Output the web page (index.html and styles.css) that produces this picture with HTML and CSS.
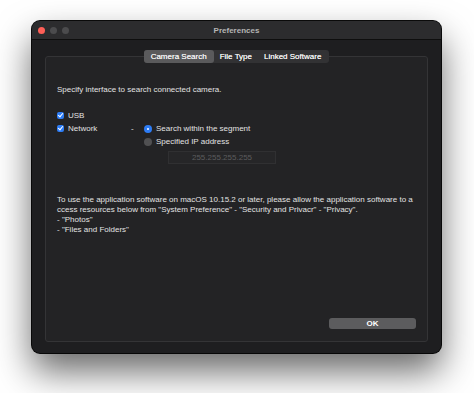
FILE: index.html
```html
<!DOCTYPE html>
<html lang="en">
<head>
    <meta charset="UTF-8">
    <title>Preferences</title>
    <link rel="stylesheet" href="styles.css">
</head>
<body>

<div class="window">
    <div class="titlebar">
        <div class="lights">
            <span class="light close"></span>
            <span class="light"></span>
            <span class="light"></span>
        </div>
        <div class="title">Preferences</div>
    </div>

    <div class="content">
        <div class="tabs">
            <span class="tab active">Camera Search</span>
            <span class="tab">File Type</span>
            <span class="tab">Linked Software</span>
        </div>

        <div class="panel">
            <p class="intro">Specify interface to search connected camera.</p>

            <div class="options">
                <div class="check-row">
                    <span class="checkbox"></span>
                    <span>USB</span>
                </div>
                <div class="network-row">
                    <div class="check-row">
                        <span class="checkbox"></span>
                        <span>Network</span>
                    </div>
                    <span class="dash">-</span>
                    <div class="radios">
                        <div class="radio-row">
                            <span class="radio on"></span>
                            <span>Search within the segment</span>
                        </div>
                        <div class="radio-row">
                            <span class="radio"></span>
                            <span>Specified IP address</span>
                        </div>
                        <div class="ip-field">255.255.255.255</div>
                    </div>
                </div>
            </div>

            <p class="notice">
                To use the application software on macOS 10.15.2 or later, please allow the application software to a<br>
                ccess resources below from "System Preference" - "Security and Privacr" - "Privacy".<br>
                - "Photos"<br>
                - "Files and Folders"
            </p>

            <div class="footer">
                <button class="ok-button">OK</button>
            </div>
        </div>
    </div>
</div>

</body>
</html>
```

FILE: styles.css
```css
html {
    background-color: #ffffff;
}
body {
    margin: 0;
    padding: 0 0 40px 0;
    font-family: 'Liberation Sans', Arial, sans-serif;
    color: #e2e2e2;
}
.window {
    width: 409px;
    height: 332px;
    margin: 21px 0 0 32px;
    background-color: #1e1e20;
    border-radius: 8px;
    box-shadow: 0 18px 36px rgba(0, 0, 0, 0.6), 0 0 0 1px #0c0c0c;
    display: flex;
    flex-direction: column;
    overflow: hidden;
}
.titlebar {
    height: 18px;
    background-color: #2c2c2e;
    border-bottom: 1px solid #0e0e0e;
    display: flex;
    align-items: center;
    position: relative;
}
.lights {
    display: flex;
    gap: 5px;
    padding-left: 6px;
}
.light {
    width: 7px;
    height: 7px;
    border-radius: 50%;
    background-color: #4b4b4d;
}
.light.close {
    background-color: #fe5f57;
}
.title {
    position: absolute;
    left: 0;
    right: 0;
    text-align: center;
    font-size: 8px;
    font-weight: bold;
    color: #b5b5b5;
}
.content {
    flex: 1;
    display: flex;
    flex-direction: column;
    padding: 10px 13px 11px 13px;
}
.tabs {
    align-self: center;
    display: flex;
    height: 13px;
    padding-right: 2px;
    background-color: #323234;
    border-radius: 3px;
    position: relative;
    z-index: 1;
    margin-bottom: -7px;
    font-size: 8px;
    color: #ececec;
}
.tab {
    padding: 0 6px;
    line-height: 13px;
    border-radius: 3px;
    text-shadow: 0 0 0.4px #ffffff;
}
.tab.active {
    background-color: #5a5a5c;
    padding: 0 7px;
}
.panel {
    flex: 1;
    background-color: #232325;
    border: 1px solid #343436;
    border-radius: 3px;
    display: flex;
    flex-direction: column;
    padding: 28px 11px 12px 11px;
    font-size: 8px;
}
.intro {
    margin: 0;
    line-height: 10px;
}
.options {
    margin-top: 14px;
    display: flex;
    flex-direction: column;
}
.check-row,
.radio-row {
    display: flex;
    align-items: center;
    height: 13px;
    gap: 4px;
}
.checkbox {
    width: 7px;
    height: 7px;
    border-radius: 2px;
    background-color: #2d7cf5;
    position: relative;
}
.checkbox::after {
    content: "";
    position: absolute;
    left: 2px;
    top: 0px;
    width: 2px;
    height: 4px;
    border: solid #ffffff;
    border-width: 0 1.3px 1.3px 0;
    transform: rotate(40deg);
}
.network-row {
    display: flex;
    align-items: flex-start;
}
.network-row .check-row {
    width: 74px;
}
.dash {
    width: 13px;
    line-height: 13px;
}
.radio {
    width: 8px;
    height: 8px;
    border-radius: 50%;
    background-color: #505052;
    position: relative;
}
.radio.on {
    background-color: #2d7cf5;
}
.radio.on::after {
    content: "";
    position: absolute;
    left: 3px;
    top: 3px;
    width: 2px;
    height: 2px;
    border-radius: 50%;
    background-color: #ffffff;
}
.ip-field {
    margin: 3px 0 0 24px;
    width: 106px;
    height: 11px;
    line-height: 11px;
    text-align: center;
    background-color: #262628;
    border: 1px solid #303032;
    color: #5c5c5e;
}
.notice {
    margin: 31px 0 0 0;
    line-height: 10px;
}
.footer {
    margin-top: auto;
    display: flex;
    justify-content: flex-end;
}
.ok-button {
    width: 87px;
    height: 11px;
    padding: 0;
    border: none;
    border-radius: 3px;
    background-color: #5c5c5e;
    color: #ffffff;
    font-family: 'Liberation Sans', Arial, sans-serif;
    font-size: 8px;
    font-weight: bold;
    line-height: 11px;
}
```
